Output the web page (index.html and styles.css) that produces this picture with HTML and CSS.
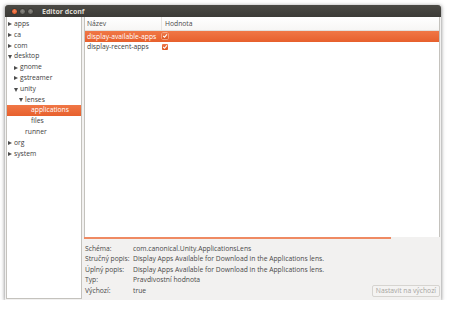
FILE: index.html
```html
<!DOCTYPE html>
<html>
<head>
<meta charset="utf-8">
<link rel="stylesheet" href="styles.css">
</head>
<body>
<div class="window">
  <div class="titlebar">
    <div class="btns">
      <span class="wb close"></span>
      <span class="wb"></span>
      <span class="wb"></span>
    </div>
    <span class="title">Editor dconf</span>
  </div>
  <div class="content">
    <div class="tree">
      <div class="node l0"><span class="arr r"></span>apps</div>
      <div class="node l0"><span class="arr r"></span>ca</div>
      <div class="node l0"><span class="arr r"></span>com</div>
      <div class="node l0"><span class="arr d"></span>desktop</div>
      <div class="node l1"><span class="arr r"></span>gnome</div>
      <div class="node l1"><span class="arr r"></span>gstreamer</div>
      <div class="node l1"><span class="arr d"></span>unity</div>
      <div class="node l2"><span class="arr d"></span>lenses</div>
      <div class="node l3 sel"><span class="arr"></span>applications</div>
      <div class="node l3"><span class="arr"></span>files</div>
      <div class="node l2"><span class="arr"></span>runner</div>
      <div class="node l0"><span class="arr r"></span>org</div>
      <div class="node l0"><span class="arr r"></span>system</div>
    </div>
    <div class="right">
      <div class="list">
        <div class="row head">
          <span class="c1">Název</span>
          <span class="c2 hsep">Hodnota</span>
        </div>
        <div class="row sel">
          <span class="c1">display-available-apps</span>
          <span class="c2"><span class="cb"><svg viewBox="0 0 6 6" width="6" height="6"><path d="M1.2 3 L2.6 4.3 L4.9 1.4" fill="none" stroke="#fff" stroke-width="1.1"/></svg></span></span>
        </div>
        <div class="row">
          <span class="c1">display-recent-apps</span>
          <span class="c2"><span class="cb"><svg viewBox="0 0 6 6" width="6" height="6"><path d="M1.2 3 L2.6 4.3 L4.9 1.4" fill="none" stroke="#fff" stroke-width="1.1"/></svg></span></span>
        </div>
      </div>
      <div class="progress"></div>
      <div class="bottom">
        <div class="info">
          <span class="lbl">Schéma:</span><span class="val">com.canonical.Unity.ApplicationsLens</span>
          <span class="lbl">Stručný popis:</span><span class="val">Display Apps Available for Download in the Applications lens.</span>
          <span class="lbl">Úplný popis:</span><span class="val">Display Apps Available for Download in the Applications lens.</span>
          <span class="lbl">Typ:</span><span class="val">Pravdivostní hodnota</span>
          <span class="lbl">Výchozí:</span><span class="val">true</span>
        </div>
        <div class="btn">Nastavit na výchozí</div>
      </div>
    </div>
  </div>
</div>
</body>
</html>
```
FILE: styles.css
```css
* { box-sizing: border-box; }
html, body { margin: 0; padding: 0; background: #ffffff; }
body {
  font-family: "Open Sans", "DejaVu Sans", sans-serif;
  font-size: 6.75px;
  color: #3c3c3c;
}
.window {
  margin: 5px 0 0 5px;
  width: 436px;
  height: 295px;
  background: #f2f1f0;
  box-shadow: 0 1px 4px rgba(0,0,0,0.55);
  display: flex;
  flex-direction: column;
}
.titlebar {
  height: 12px;
  background: linear-gradient(#4b4a45, #3c3b37);
  display: flex;
  align-items: center;
  padding-left: 6px;
  border-radius: 3px 3px 0 0;
}
.btns { display: flex; gap: 1px; }
.wb {
  width: 7px; height: 7px; border-radius: 50%;
  background: radial-gradient(circle at 50% 40%, #8a8882, #5c5b56);
  border: 1px solid #3a3935;
}
.wb.close { background: radial-gradient(circle at 50% 40%, #f58a5e, #df4a16); }
.title {
  margin-left: 8px;
  color: #dfdbd2;
  font-weight: bold;
  font-size: 7px;
}
.content {
  flex: 1;
  display: flex;
  padding: 0 1px 1px 1px;
}
.tree {
  width: 76px;
  background: #fff;
  border: 1px solid #c4c2bd;
  border-top: none;
  padding-top: 2px;
}
.node {
  height: 10.8px;
  line-height: 10.8px;
  display: flex;
  align-items: center;
  color: #3c3c3c;
  white-space: nowrap;
}
.node.sel {
  background: linear-gradient(#f07746, #e7602d);
  color: #fff;
}
.l0 { padding-left: 1px; }
.l1 { padding-left: 7px; }
.l2 { padding-left: 12px; }
.l3 { padding-left: 18px; }
.arr { width: 6px; height: 6px; position: relative; flex: none; }
.arr.r::before {
  content: ""; position: absolute; left: 0; top: 1px;
  border-left: 4px solid #4c4c4c;
  border-top: 2.5px solid transparent;
  border-bottom: 2.5px solid transparent;
}
.arr.d::before {
  content: ""; position: absolute; left: 0; top: 1.5px;
  border-top: 4px solid #4c4c4c;
  border-left: 2.5px solid transparent;
  border-right: 2.5px solid transparent;
}
.right {
  flex: 1;
  margin-left: 2px;
  display: flex;
  flex-direction: column;
}
.list {
  height: 220px;
  background: #fff;
  border-left: 1px solid #c4c2bd;
  border-right: 1px solid #c4c2bd;
}
.row {
  display: flex;
  height: 10.5px;
  align-items: center;
  white-space: nowrap;
}
.row.head {
  height: 14px;
  background: linear-gradient(#ffffff, #f7f6f5);
  border-bottom: 1px solid #e2e0dd;
  color: #4c4c4c;
}
.row.sel {
  background: linear-gradient(#f07746, #e7602d);
  color: #fff;
}
.c1 { width: 76px; padding-left: 2px; }
.c2 { padding-left: 1px; display: flex; align-items: center; }
.hsep { border-left: 1px solid #e6e4e1; padding-left: 3px; height: 13px; }
.cb {
  width: 6px; height: 6px;
  background: linear-gradient(#ef7a4b, #dd5520);
  border-radius: 1px;
  display: flex;
}
.row.sel .cb { box-shadow: 0 0 0 0.5px #fbd3c2; }
.progress {
  height: 2px;
  width: 307px;
  background: #ef8a63;
}
.bottom {
  flex: 1;
  display: flex;
  align-items: flex-end;
  justify-content: space-between;
  padding: 4px 0 2px 1px;
}
.info {
  display: grid;
  grid-template-columns: 48px auto;
  grid-auto-rows: 10.5px;
  align-items: center;
  align-self: flex-start;
  color: #4a4a4a;
}
.btn {
  border: 1px solid #d6d4d0;
  border-radius: 2px;
  height: 12px;
  line-height: 10px;
  padding: 0 3px;
  color: #a6a49f;
  background: #f4f3f2;
}
```
